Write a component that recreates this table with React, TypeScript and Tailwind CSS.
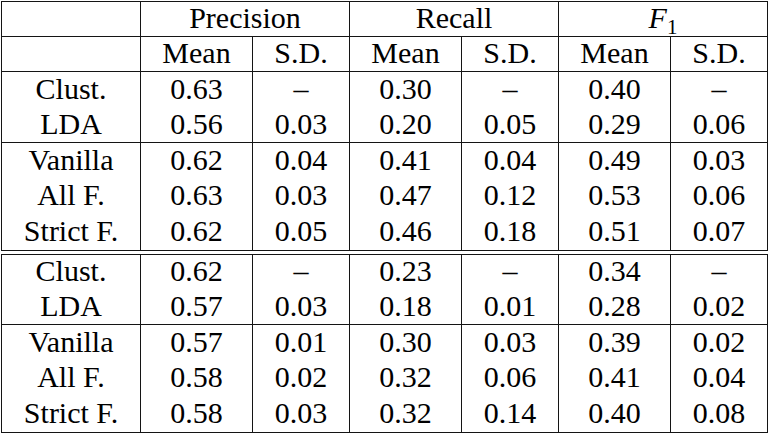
const blockA = [
  { label: 'Clust.', v: ['0.63', '–', '0.30', '–', '0.40', '–'] },
  { label: 'LDA', v: ['0.56', '0.03', '0.20', '0.05', '0.29', '0.06'], line: true },
  { label: 'Vanilla', v: ['0.62', '0.04', '0.41', '0.04', '0.49', '0.03'] },
  { label: 'All F.', v: ['0.63', '0.03', '0.47', '0.12', '0.53', '0.06'] },
  { label: 'Strict F.', v: ['0.62', '0.05', '0.46', '0.18', '0.51', '0.07'] },
]

const blockB = [
  { label: 'Clust.', v: ['0.62', '–', '0.23', '–', '0.34', '–'] },
  { label: 'LDA', v: ['0.57', '0.03', '0.18', '0.01', '0.28', '0.02'], line: true },
  { label: 'Vanilla', v: ['0.57', '0.01', '0.30', '0.03', '0.39', '0.02'] },
  { label: 'All F.', v: ['0.58', '0.02', '0.32', '0.06', '0.41', '0.04'] },
  { label: 'Strict F.', v: ['0.58', '0.03', '0.32', '0.14', '0.40', '0.08'] },
]

type Row = { label: string; v: string[]; line?: boolean }

// row heights alternate so the rules land where LaTeX put them
const heights = ['h-[36px]', 'h-[35px]', 'h-[36px]', 'h-[35px]', 'h-[36px]']
const heightsB = ['h-[35px]', 'h-[35px]', 'h-[36px]', 'h-[35px]', 'h-[36px]']

function Cell({ w, children, first }: { w: string; children?: React.ReactNode; first?: boolean }) {
  return (
    <div
      className={`${w} flex items-center justify-center pb-[3px] ${first ? '' : 'border-l border-[#141414]'}`}
    >
      <span>{children}</span>
    </div>
  )
}

function BodyRows({ rows, hs }: { rows: Row[]; hs: string[] }) {
  return (
    <>
      {rows.map((r, i) => (
        <div
          key={r.label}
          className={`flex ${hs[i]} ${r.line ? 'border-b border-[#141414]' : ''}`}
        >
          <Cell w="w-[138px]" first>
            {r.label}
          </Cell>
          {r.v.map((x, j) => (
            <Cell key={j} w={j % 2 === 0 ? 'w-[112px]' : 'w-[97px]'}>
              {x}
            </Cell>
          ))}
        </div>
      ))}
    </>
  )
}

export default function App() {
  return (
    <div className="w-[770px] h-[436px] bg-white pt-px pl-px text-black text-[30px] leading-none font-['Liberation_Serif']">
      {/* upper block */}
      <div className="w-[767px] border border-[#141414]">
        <div className="flex h-[35px] border-b border-[#141414]">
          <Cell w="w-[138px]" first />
          <Cell w="w-[209px]">Precision</Cell>
          <Cell w="w-[209px]">Recall</Cell>
          <Cell w="w-[209px]">
            <i>F</i>
            <span className="relative top-[6px] text-[21px]">1</span>
          </Cell>
        </div>
        <div className="flex h-[35px] border-b border-[#141414]">
          <Cell w="w-[138px]" first />
          {['Mean', 'S.D.', 'Mean', 'S.D.', 'Mean', 'S.D.'].map((h, j) => (
            <Cell key={j} w={j % 2 === 0 ? 'w-[112px]' : 'w-[97px]'}>
              {h}
            </Cell>
          ))}
        </div>
        <BodyRows rows={blockA} hs={heights} />
      </div>

      {/* lower block */}
      <div className="mt-[3px] w-[767px] border border-[#141414]">
        <BodyRows rows={blockB} hs={heightsB} />
      </div>
    </div>
  )
}
